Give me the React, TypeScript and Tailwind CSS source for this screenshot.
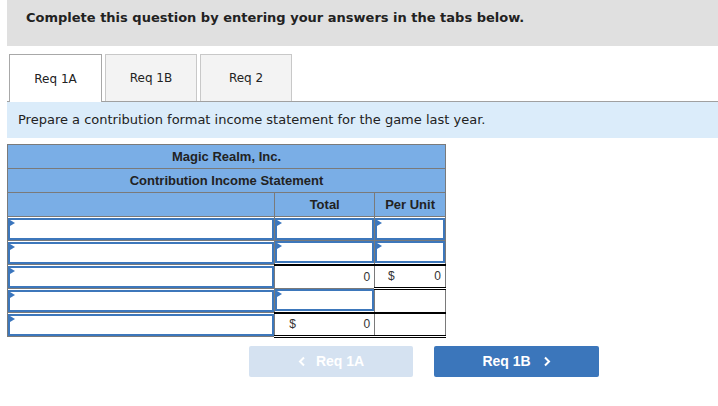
import React from "react";

const verdana = { fontFamily: '"DejaVu Sans", Verdana, sans-serif' };
const arial = { fontFamily: '"Liberation Sans", Arial, sans-serif' };

function Tri() {
  return (
    <span className="absolute left-0 top-0 w-0 h-0 border-t-[3px] border-b-[3px] border-l-[5px] border-t-transparent border-b-transparent border-l-[#3a75bd]" />
  );
}

function InputCell() {
  return (
    <div className="relative h-[22px] border-2 border-[#3d77bb] bg-white">
      <Tri />
    </div>
  );
}

export default function App() {
  return (
    <div className="w-[718px] h-[406px] bg-white overflow-hidden">
      <div className="ml-[7px]">
        <div className="h-[46px] bg-[#e0e0e0] pl-[19px] pt-[8px] text-[13px] font-bold text-[#222]" style={verdana}>
          Complete this question by entering your answers in the tabs below.
        </div>
        <div className="mt-[8px] flex gap-[3px] pl-[2px] border-b border-[#a0a0a0] text-[12px] text-[#222]" style={verdana}>
          <div className="w-[93px] h-[48px] -mb-px bg-white border border-b-0 border-[#a8a8a8] flex items-center justify-center">Req 1A</div>
          <div className="w-[92px] h-[47px] bg-[#f3f3f3] border border-b-0 border-[#c8c8c8] flex items-center justify-center">Req 1B</div>
          <div className="w-[92px] h-[47px] bg-[#f3f3f3] border border-b-0 border-[#c8c8c8] flex items-center justify-center">Req 2</div>
        </div>
        <div className="h-[36px] bg-[#dbecfa] pl-[11px] flex items-center text-[13px] text-[#222]" style={verdana}>
          Prepare a contribution format income statement for the game last year.
        </div>
        <table className="mt-[6px] w-[439px] border-collapse text-[13px] text-[#222]" style={arial}>
          <colgroup>
            <col className="w-[268px]" />
            <col className="w-[100px]" />
            <col className="w-[71px]" />
          </colgroup>
          <tbody>
            <tr className="h-[24px] bg-[#7aaee6]">
              <td colSpan={3} className="border border-[#7a7a7a] text-center font-bold">Magic Realm, Inc.</td>
            </tr>
            <tr className="h-[24px] bg-[#7aaee6]">
              <td colSpan={3} className="border border-[#7a7a7a] text-center font-bold">Contribution Income Statement</td>
            </tr>
            <tr className="h-[24px] bg-[#7aaee6]">
              <td className="border border-[#7a7a7a]"></td>
              <td className="border border-[#7a7a7a] text-center font-bold">Total</td>
              <td className="border border-[#7a7a7a] text-center font-bold">Per Unit</td>
            </tr>
            <tr className="h-[24px]">
              <td className="border border-[#7a7a7a] p-0"><InputCell /></td>
              <td className="border border-[#7a7a7a] p-0"><InputCell /></td>
              <td className="border border-[#7a7a7a] p-0"><InputCell /></td>
            </tr>
            <tr className="h-[24px]">
              <td className="border border-[#7a7a7a] p-0"><InputCell /></td>
              <td className="border border-[#7a7a7a] border-b-2 border-b-black p-0"><InputCell /></td>
              <td className="border border-[#7a7a7a] border-b-2 border-b-black p-0"><InputCell /></td>
            </tr>
            <tr className="h-[24px] text-[12px] text-[#333]">
              <td className="border border-[#7a7a7a] p-0"><InputCell /></td>
              <td className="border border-[#7a7a7a] border-t-black text-right pr-[4px]">0</td>
              <td className="border border-[#7a7a7a] border-t-black border-b-[3px] border-b-black border-double p-0">
                <div className="flex justify-between pl-[13px] pr-[4px]"><span>$</span><span>0</span></div>
              </td>
            </tr>
            <tr className="h-[24px]">
              <td className="border border-[#7a7a7a] p-0"><InputCell /></td>
              <td className="border border-[#7a7a7a] border-b-2 border-b-black p-0"><InputCell /></td>
              <td className="border border-[#7a7a7a] border-b-2 border-b-black"></td>
            </tr>
            <tr className="h-[24px] text-[12px] text-[#333]">
              <td className="border border-[#7a7a7a] p-0"><InputCell /></td>
              <td className="border border-[#7a7a7a] border-b-[3px] border-b-black border-double p-0">
                <div className="flex justify-between pl-[14px] pr-[4px]"><span>$</span><span>0</span></div>
              </td>
              <td className="border border-[#7a7a7a] border-b-[3px] border-b-black border-double"></td>
            </tr>
          </tbody>
        </table>
        <div className="mt-[8px] ml-[242px] flex gap-[21px] text-[14px] font-bold text-white" style={arial}>
          <div className="w-[164px] h-[31px] rounded-[2px] bg-[#d5e2f1] flex items-center justify-center gap-[10px]">
            <svg width="8" height="11" viewBox="0 0 8 11"><path d="M6 1.5 L2 5.5 L6 9.5" stroke="white" strokeWidth="2" fill="none" /></svg>
            <span>Req 1A</span>
          </div>
          <div className="w-[165px] h-[31px] rounded-[2px] bg-[#3b76bb] flex items-center justify-center gap-[12px]">
            <span>Req 1B</span>
            <svg width="8" height="11" viewBox="0 0 8 11"><path d="M2 1.5 L6 5.5 L2 9.5" stroke="white" strokeWidth="2" fill="none" /></svg>
          </div>
        </div>
      </div>
    </div>
  );
}
